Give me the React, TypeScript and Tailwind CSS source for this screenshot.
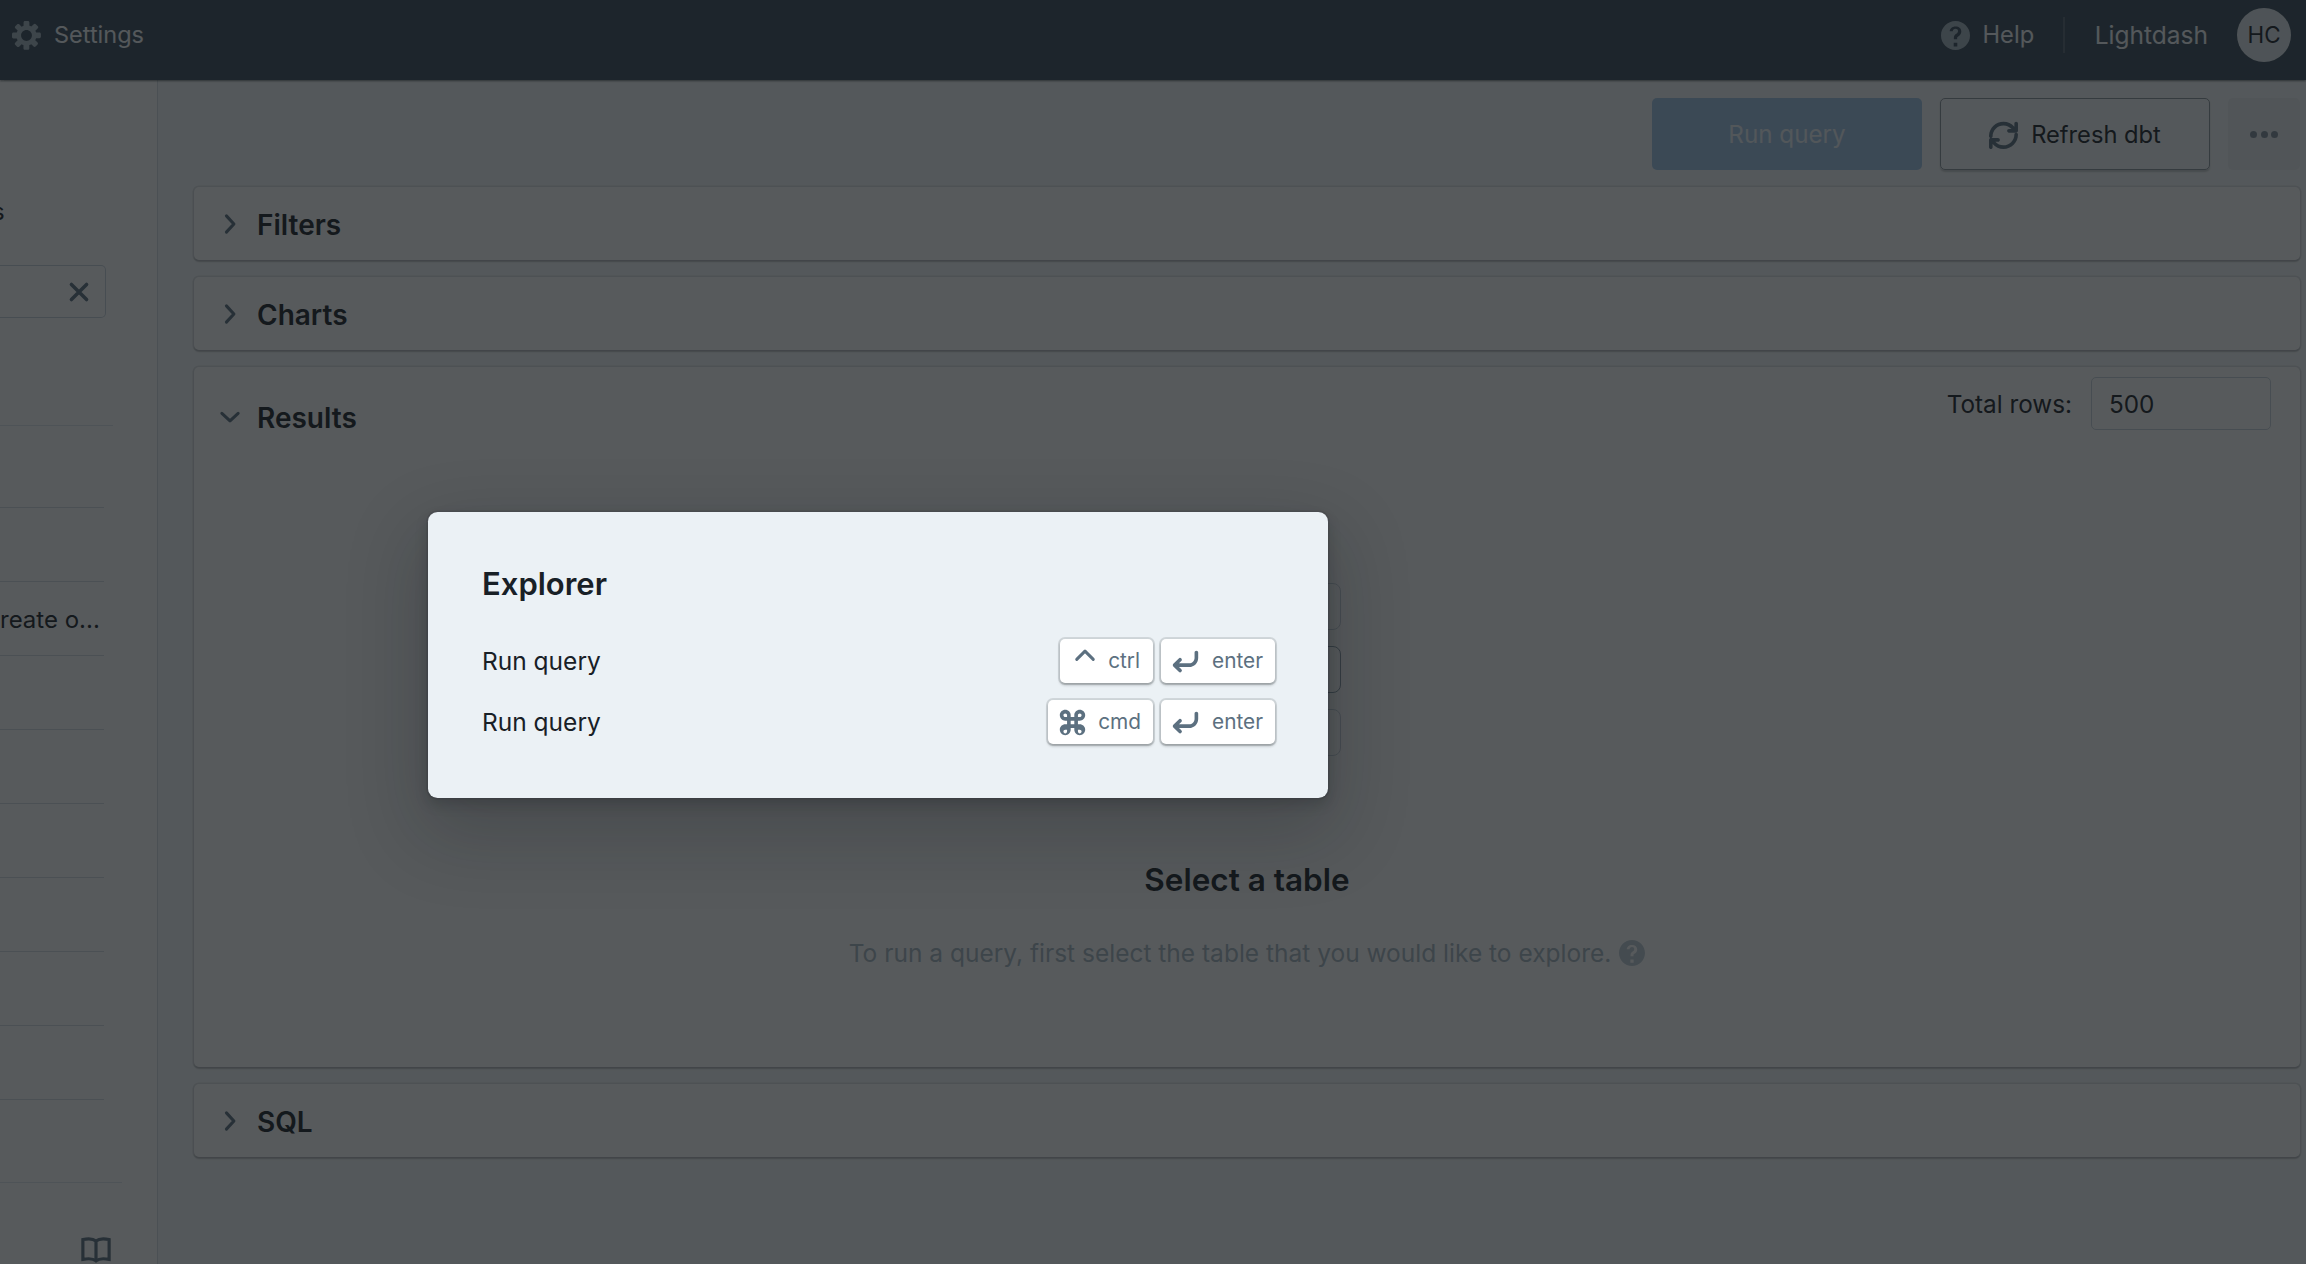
import React from 'react';

const COG = "M15.19 6.39h-1.85c-.11-.37-.27-.71-.45-1.04l1.36-1.36c.31-.31.31-.82 0-1.13l-1.13-1.13a.803.803 0 00-1.13 0l-1.36 1.36c-.33-.17-.67-.33-1.04-.44V.81c0-.44-.36-.8-.8-.8h-1.6c-.44 0-.8.36-.8.8v1.86c-.39.12-.75.28-1.1.47l-1.3-1.3c-.3-.3-.79-.3-1.09 0L1.82 2.91c-.3.3-.3.79 0 1.09l1.3 1.3c-.2.34-.36.7-.47 1.09H.81c-.45 0-.81.36-.81.8v1.6c0 .44.36.8.81.8h1.85c.11.37.27.71.45 1.04l-1.36 1.36c-.3.3-.3.79 0 1.09l1.09 1.09c.3.3.79.3 1.09 0l1.36-1.36c.33.18.67.33 1.04.44v1.86c0 .44.36.8.8.8h1.6c.44 0 .8-.36.8-.8v-1.86c.39-.12.75-.28 1.1-.47l1.3 1.3c.3.3.79.3 1.09 0l1.09-1.09c.3-.3.3-.79 0-1.09l-1.3-1.3c.19-.35.36-.71.47-1.1h1.85c.45 0 .81-.36.81-.8V7.2c.01-.45-.35-.81-.8-.81zM8 11c-1.66 0-3-1.34-3-3s1.34-3 3-3 3 1.34 3 3-1.34 3-3 3z";
const HELP = "M8 0C3.58 0 0 3.58 0 8s3.58 8 8 8 8-3.58 8-8-3.58-8-8-8zM7 12h2v2H7v-2zM8 3c2 0 3.2 1.1 3.2 2.8 0 1.2-.6 2-1.7 2.7-.5.3-.6.5-.6 1v.5H7.1v-.7c0-1.1.4-1.7 1.3-2.3.7-.4 1-.8 1-1.5 0-.7-.6-1.2-1.4-1.2-.9 0-1.5.6-1.5 1.4H4.8C4.8 4.2 6.1 3 8 3z";
const REFRESH = "M14.99 6.99c-.55 0-1 .45-1 1 0 3.31-2.69 6-6 6-1.77 0-3.36-.78-4.46-2h1.46c.55 0 1-.45 1-1s-.45-1-1-1h-4c-.55 0-1 .45-1 1v4c0 .55.45 1 1 1s1-.45 1-1v-1.74a7.95 7.95 0 006 2.74c4.42 0 8-3.58 8-8 0-.55-.45-1-1-1zm0-6c-.55 0-1 .45-1 1v1.74a7.95 7.95 0 00-6-2.74c-4.42 0-8 3.58-8 8 0 .55.45 1 1 1s1-.45 1-1c0-3.31 2.69-6 6-6 1.77 0 3.36.78 4.46 2h-1.46c-.55 0-1 .45-1 1s.45 1 1 1h4c.55 0 1-.45 1-1v-4c0-.55-.45-1-1-1z";
const CMD = "M12 9h-1V7h1c1.66 0 3-1.34 3-3s-1.34-3-3-3-3 1.34-3 3v1H7V4c0-1.66-1.34-3-3-3S1 2.34 1 4s1.34 3 3 3h1v2H4c-1.66 0-3 1.34-3 3s1.34 3 3 3 3-1.34 3-3v-1h2v1c0 1.66 1.34 3 3 3s3-1.34 3-3-1.34-3-3-3zm-1-5c0-.55.45-1 1-1s1 .45 1 1-.45 1-1 1h-1V4zM4 5c-.55 0-1-.45-1-1s.45-1 1-1 1 .45 1 1v1H4zm1 8c0 .55-.45 1-1 1s-1-.45-1-1 .45-1 1-1h1v1zm4-4H7V7h2v2zm3 5c-.55 0-1-.45-1-1v-1h1c.55 0 1 .45 1 1s-.45 1-1 1z";
const ENTER = "M14 2c-.55 0-1 .45-1 1v3c0 1.66-1.34 3-3 3H4.41L5.7 7.71c.19-.18.3-.43.3-.71a1.003 1.003 0 00-1.71-.71l-3 3c-.18.18-.29.43-.29.71 0 .28.11.53.29.71l3 3a1.003 1.003 0 001.42-1.42L4.41 11H10c2.76 0 5-2.24 5-5V3c0-.55-.45-1-1-1z";

const cardShadow = 'shadow-[0_0_0_1.6px_rgba(16,22,26,0.1),0_1.6px_1.6px_rgba(16,22,26,0.2)]';

function Icon({ d, className }: { d: string; className: string }) {
  return (
    <svg viewBox="0 0 16 16" fill="currentColor" className={className}>
      <path d={d} fillRule="evenodd" />
    </svg>
  );
}

function Chevron({ open }: { open?: boolean }) {
  return (
    <svg viewBox="0 0 16 16" fill="none" stroke="#5c7080" strokeWidth="1.9" strokeLinecap="round" strokeLinejoin="round" className="w-[26px] h-[26px] shrink-0">
      <path d={open ? 'M3 5.7 8 10.4 13 5.7' : 'M5.8 3 10.4 8 5.8 13'} />
    </svg>
  );
}

function Card({ title }: { title: string }) {
  return (
    <div className={`h-[73px] rounded-[5px] bg-white ${cardShadow} flex items-center pl-[23px] gap-[14px]`}>
      <Chevron />
      <h5 className="text-[28px] leading-[40px] mt-[2px] font-semibold text-[#182026]">{title}</h5>
    </div>
  );
}

function Kbd({ children, className }: { children: React.ReactNode; className: string }) {
  return (
    <div className={`h-[44px] rounded-[5px] bg-white shadow-[0_0_0_2px_rgba(16,22,26,0.12),0_2px_3px_rgba(16,22,26,0.3)] flex items-center text-[20.8px] text-[#5c7080] ${className}`}>
      {children}
    </div>
  );
}

function EnterKey() {
  return (
    <Kbd className="pl-[10px] pr-[12px] gap-[12px]">
      <Icon d={ENTER} className="w-[29px] h-[29px]" />
      <span>enter</span>
    </Kbd>
  );
}

const rows = ['', 'reate o...', '', '', '', '', '', ''];

export default function App() {
  return (
    <div className="relative w-[2306px] h-[1264px] overflow-hidden bg-[#f5f8fa] font-['Inter',sans-serif] text-[#182026]">
      <nav className="h-[80px] pb-[10px] bg-[#394b59] flex items-center text-[#f5f8fa] shadow-[0_1.6px_1.6px_rgba(16,22,26,0.4)] relative">
        <Icon d={COG} className="w-[29px] h-[29px] ml-[12px] text-[#a7b6c2]" />
        <span className="ml-[13px] text-[23.5px]">Settings</span>
        <div className="ml-auto flex items-center">
          <Icon d={HELP} className="w-[29px] h-[29px] text-[#a7b6c2]" />
          <span className="ml-[12px] text-[23.7px]">Help</span>
          <div className="w-[1.6px] h-[36px] bg-white/15 ml-[29px] mr-[30px]" />
          <span className="text-[24.500px]">Lightdash</span>
          <div className="w-[54px] h-[54px] rounded-full bg-[#e1e8ed] text-[#182026] text-[22.4px] flex items-center justify-center ml-[29px] mr-[15px]">HC</div>
        </div>
      </nav>

      <div className="flex h-[1184px]">
        <aside className="w-[158px] shrink-0 bg-white border-r-[1.6px] border-[#d5dde3] flex flex-col overflow-hidden">
          <div className="h-[346px] shrink-0 flex flex-col border-b-[1.6px] border-[#e1e8ed] w-[113px]">
            <div className="pt-[115px] text-[24px] leading-[34px] -ml-[8px]">s</div>
            <div className="mt-[36px] w-[106px] h-[53px] rounded-r-[5px] border-[1.6px] border-l-0 border-[#c9d3db] flex items-center justify-end pr-[15px]">
              <svg viewBox="0 0 16 16" fill="none" stroke="#5c7080" strokeWidth="2.6" strokeLinecap="round" className="w-[22px] h-[22px]">
                <path d="M2.5 2.5 13.5 13.5M13.5 2.5 2.5 13.5" />
              </svg>
            </div>
          </div>
          <div className="w-[104px] shrink-0">
            <div className="h-[82px] border-b-[1.6px] border-[#d5dde3]" />
            {rows.map((r, i) => (
              <div key={i} className="h-[74px] pt-[2px] border-b-[1.6px] border-[#d5dde3] flex items-center text-[24px] whitespace-nowrap">{r}</div>
            ))}
          </div>
          <div className="w-[122px] h-[83px] shrink-0 border-b-[1.6px] border-[#e1e8ed]" />
          <div className="flex justify-end w-[111px] pt-[52px]">
            <svg viewBox="0 0 16 16" fill="none" stroke="#5c7080" strokeWidth="1.7" className="w-[30px] h-[30px] shrink-0">
              <path d="M8 3.2C6.6 2 3.5 1.900 1 2.400V13c2.500-.5 5.600-.4 7 .8 1.400-1.200 4.500-1.300 7-.8V2.400C12.500 1.900 9.400 2 8 3.200ZM8 3.200V13.800" />
            </svg>
          </div>
        </aside>

        <main className="flex-1 pl-[36px] pr-[6px] pt-[18px] flex flex-col">
          <div className="flex justify-end gap-[18px] h-[72px] mb-[17px]">
            <button className="w-[270px] rounded-[5px] bg-[#9fc3e8] text-[#eef3f8] text-[24.2px] pt-[2px]">Run query</button>
            <button className="w-[270px] rounded-[5px] border-[1.6px] border-[#8a949c] shadow-[0_1.6px_1.6px_rgba(16,22,26,0.2)] flex items-center justify-center gap-[13px] text-[23.7px]">
              <Icon d={REFRESH} className="w-[29px] h-[29px] text-[#5c7080]" />
              <span className="mt-[2px]">Refresh dbt</span>
            </button>
            <button className="w-[72px] rounded-[5px] bg-[#e9edf0] flex items-center justify-center gap-[3.500px]">
              <span className="w-[7px] h-[7px] rounded-full bg-[#7f8f9c]" />
              <span className="w-[7px] h-[7px] rounded-full bg-[#7f8f9c]" />
              <span className="w-[7px] h-[7px] rounded-full bg-[#7f8f9c]" />
            </button>
          </div>

          <div className="flex flex-col gap-[17px]">
            <Card title="Filters" />
            <Card title="Charts" />
            <div className={`h-[700px] rounded-[5px] bg-white ${cardShadow} flex flex-col`}>
              <div className="flex items-start pl-[23px] pr-[29px]">
                <div className="flex items-center gap-[14px] h-[100px]">
                  <Chevron open />
                  <h5 className="text-[28px] leading-[40px] mt-[2px] font-semibold">Results</h5>
                </div>
                <div className="ml-auto flex items-center gap-[19px] pt-[10px] text-[24.300px]">
                  <span className="mt-[2px]">Total rows:</span>
                  <div className="w-[180px] h-[53px] pt-[2px] rounded-[5px] border-[1.6px] border-[#c9d3db] flex items-center pl-[17px]">500</div>
                </div>
              </div>
              <div className="flex flex-col items-center">
                <div className="w-[188px] flex flex-col gap-[16px] mt-[116px]">
                  <div className="h-[47px] rounded-[8px] border-[1.6px] border-[#c9d3db]" />
                  <div className="h-[47px] rounded-[8px] border-[1.6px] border-[#8a9ba8]" />
                  <div className="h-[47px] rounded-[8px] border-[1.6px] border-[#c9d3db]" />
                </div>
                <h4 className="text-[31.500px] leading-[47px] font-semibold mt-[100px]">Select a table</h4>
                <div className="flex items-center gap-[8px] mt-[32px] text-[24.500px] leading-[36px] text-[#a7b6c2]">
                  <span>To run a query, first select the table that you would like to explore.</span>
                  <Icon d={HELP} className="w-[26px] h-[26px] text-[#bfccd6]" />
                </div>
              </div>
            </div>
            <Card title="SQL" />
          </div>
        </main>
      </div>

      <div className="absolute inset-0 bg-[#121619]/71" />

      <div className="absolute left-[428px] top-[512px] w-[900px] h-[286px] rounded-[9.6px] bg-[#ebf1f5] shadow-[0_0_0_1.6px_rgba(16,22,26,0.1),0_6px_13px_rgba(16,22,26,0.2),0_29px_74px_10px_rgba(16,22,26,0.2)] pt-[52px] pl-[54px] pr-[53px] text-[#182026]">
        <h4 className="text-[31px] font-semibold leading-[40px]">Explorer</h4>
        <div className="mt-[35px] flex flex-col gap-[17px]">
          <div className="flex items-center justify-between h-[44px]">
            <span className="text-[24.500px]">Run query</span>
            <div className="flex gap-[8px]">
              <Kbd className="pl-[14px] pr-[13px] gap-[12px]">
                <svg viewBox="0 0 16 16" fill="none" stroke="currentColor" strokeWidth="2.2" strokeLinecap="round" strokeLinejoin="round" className="w-[22px] h-[22px] -mt-[10px]">
                  <path d="M2 10.500 8 4.500 14 10.500" />
                </svg>
                <span>ctrl</span>
              </Kbd>
              <EnterKey />
            </div>
          </div>
          <div className="flex items-center justify-between h-[44px]">
            <span className="text-[24.500px]">Run query</span>
            <div className="flex gap-[8px]">
              <Kbd className="pl-[10px] pr-[12px] gap-[11px]">
                <Icon d={CMD} className="w-[29px] h-[29px]" />
                <span>cmd</span>
              </Kbd>
              <EnterKey />
            </div>
          </div>
        </div>
      </div>
    </div>
  );
}
